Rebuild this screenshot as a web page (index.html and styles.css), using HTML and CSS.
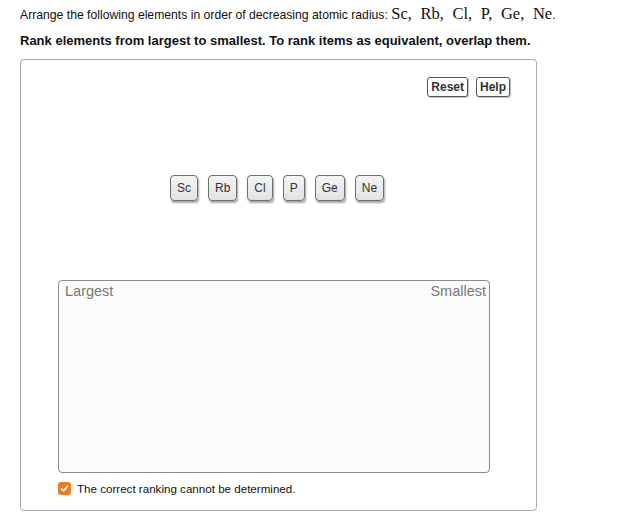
FILE: index.html
```html
<!DOCTYPE html>
<html>
<head>
<meta charset="utf-8">
<link rel="stylesheet" href="styles.css">
</head>
<body>
<div class="page">
  <p class="prompt">Arrange the following elements in order of decreasing atomic radius: <span class="chem">Sc, Rb, Cl, P, Ge, Ne</span>.</p>
  <p class="instr">Rank elements from largest to smallest. To rank items as equivalent, overlap them.</p>
  <div class="panel">
    <div class="tools">
      <button class="tbtn">Reset</button>
      <button class="tbtn">Help</button>
    </div>
    <div class="tiles">
      <span class="tile">Sc</span>
      <span class="tile">Rb</span>
      <span class="tile">Cl</span>
      <span class="tile">P</span>
      <span class="tile">Ge</span>
      <span class="tile">Ne</span>
    </div>
    <div class="rank">
      <span class="lbl">Largest</span>
      <span class="lbl">Smallest</span>
    </div>
    <label class="check">
      <span class="box"><svg width="9" height="9" viewBox="0 0 9 9"><path d="M1.5 4.8 L3.6 6.8 L7.6 2.2" fill="none" stroke="#fff" stroke-width="1.6" stroke-linecap="round" stroke-linejoin="round"/></svg></span>
      <span>The correct ranking cannot be determined.</span>
    </label>
  </div>
</div>
</body>
</html>
```
FILE: styles.css
```css
html, body { margin: 0; padding: 0; background: #fff; }
body { font-family: "Liberation Sans", Arial, sans-serif; color: #111; font-size: 12px; }
.page { padding: 6px 0 0 20px; width: 517px; }
.prompt { margin: 0; line-height: 16px; height: 16px; font-size: 12.2px; white-space: nowrap; }
.chem { font-family: "Liberation Serif", "Times New Roman", serif; font-size: 16.5px; word-spacing: 4.5px; }
.instr { margin: 11px 0 0 0; font-weight: bold; line-height: 16px; font-size: 13px; white-space: nowrap; }
.panel {
  margin-top: 10px;
  border: 1px solid #a9a9a9;
  border-radius: 4px;
  height: 452px;
  box-sizing: border-box;
  display: flex;
  flex-direction: column;
  padding: 0 0 0 37px;
}
.tools { display: flex; justify-content: flex-end; gap: 8px; padding: 17px 26px 0 0; }
.tbtn {
  font-family: "Liberation Sans", Arial, sans-serif;
  font-weight: bold;
  font-size: 12px;
  color: #333;
  background: #fff;
  border: 1px solid #555;
  border-radius: 3px;
  padding: 0 3px;
  height: 20px;
  line-height: 18px;
  box-shadow: 1px 1px 1px rgba(0,0,0,0.25);
}
.tiles { display: flex; gap: 10px; margin: 78px 0 0 112px; }
.tile {
  display: inline-block;
  height: 26px;
  box-sizing: border-box;
  line-height: 24px;
  padding: 0 6px;
  font-size: 12px;
  color: #333;
  border: 1px solid #6e6e6e;
  border-radius: 4px;
  background: linear-gradient(#f4f4f4, #e2e2e2);
  box-shadow: 1px 2px 2px rgba(0,0,0,0.35);
}
.rank {
  margin-top: 79px;
  width: 432px;
  height: 193px;
  box-sizing: border-box;
  border: 1px solid #8c8c8c;
  border-radius: 4px;
  background: #fcfcfc;
  display: flex;
  justify-content: space-between;
  align-items: flex-start;
  padding: 2px 3px 0 6px;
}
.lbl { font-size: 14.5px; color: #777; line-height: 16px; }
.check { display: flex; align-items: center; gap: 6px; margin-top: 9px; font-size: 11.6px; color: #111; }
.box {
  width: 13px; height: 13px;
  border-radius: 3px;
  background: #ef7a24;
  display: flex; align-items: center; justify-content: center;
}
```
